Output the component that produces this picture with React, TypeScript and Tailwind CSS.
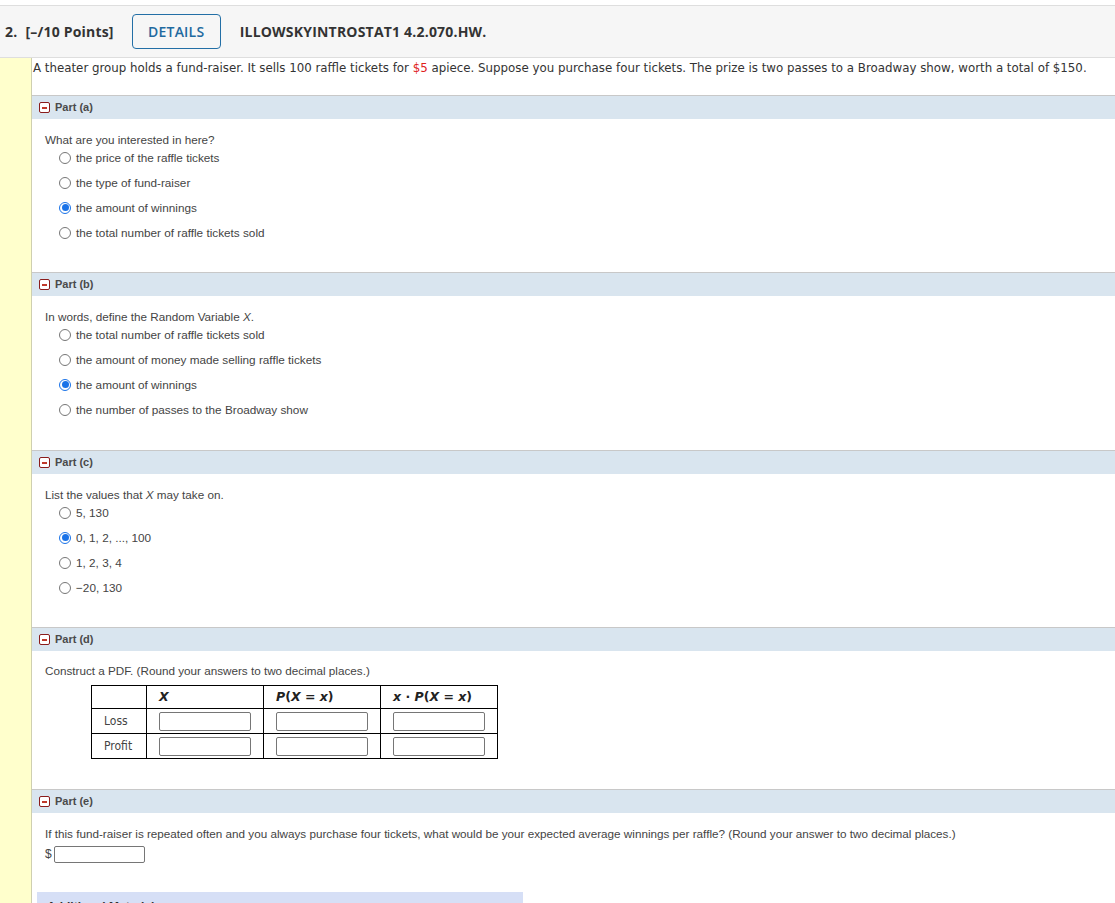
import React from 'react';

const arial = { fontFamily: '"Liberation Sans", Arial, sans-serif' };
const tahoma = { fontFamily: '"DejaVu Sans Condensed", "DejaVu Sans", Tahoma, sans-serif' };

function MinusBox() {
    return (
        <span className="inline-flex h-[11px] w-[11px] items-center justify-center rounded-[2px] border border-[#8a1c1c] bg-white">
            <span className="h-[2px] w-[5px] bg-[#c0392b]" />
        </span>
    );
}

function Radio({ checked }: { checked?: boolean }) {
    if (checked) {
        return (
            <span className="inline-flex h-[12px] w-[12px] items-center justify-center rounded-full border border-[#1a73e8] bg-white">
                <span className="h-[7px] w-[7px] rounded-full bg-[#1a73e8]" />
            </span>
        );
    }
    return <span className="inline-block h-[12px] w-[12px] rounded-full border border-[#767676] bg-white" />;
}

function PartHeader({ label }: { label: string }) {
    return (
        <div className="flex h-[24px] items-center gap-[5px] border-t border-[#c8c8c8] bg-[#d9e5ef] pl-[7px]">
            <MinusBox />
            <span className="text-[11px] font-bold text-[#4a4a4a]" style={arial}>
                {label}
            </span>
        </div>
    );
}

function Options({ items, selected }: { items: string[]; selected: number }) {
    return (
        <div className="mt-[-2px] pl-[14px]">
            {items.map((t, i) => (
                <div key={t} className="flex h-[25px] items-center gap-[5px]">
                    <Radio checked={i === selected} />
                    <span className="text-[11.75px] text-[#444]">{t}</span>
                </div>
            ))}
        </div>
    );
}

function Question({ children }: { children: React.ReactNode }) {
    return <div className="h-[14px] text-[11.7px] leading-[14px] text-[#444]">{children}</div>;
}

function Cell({ children }: { children?: React.ReactNode }) {
    return <td className="h-[25px] border border-black px-[12px]">{children}</td>;
}

function Field({ w = 'w-[92px]', h = 'h-[19px]' }: { w?: string; h?: string }) {
    return <span className={`block ${h} ${w} rounded-[2px] border border-[#767676] bg-white`} />;
}

export default function App() {
    const math = { fontFamily: '"DejaVu Sans", Verdana, sans-serif' };
    return (
        <div className="min-h-[903px] bg-white text-[#333]" style={arial}>
            {/* Question header */}
            <div className="h-[5px]" />
            <div
                className="flex h-[53px] items-center border-y border-[#dedede] bg-[#f6f6f6] pl-[5px] text-[14px] font-bold tracking-[0.2px] text-[#333]"
                style={{ fontFamily: '"Open Sans", sans-serif' }}
            >
                <span>2.</span>
                <span className="ml-[8px]">[–/10 Points]</span>
                <span className="ml-[18px] flex h-[35px] w-[89px] items-center justify-center rounded-[4px] border border-[#236fa6] font-semibold text-[#1f6aa0]">
                    DETAILS
                </span>
                <span className="ml-[19px]">ILLOWSKYINTROSTAT1 4.2.070.HW.</span>
            </div>

            <div className="flex">
                {/* yellow margin */}
                <div className="w-[32px] shrink-0 border-r border-[#cfcfb0] bg-[#ffffcc]" />

                <div className="min-w-0 flex-1">
                    <div className="h-[37px] pt-[1px] pl-[1px] text-[13.15px] leading-[18px] text-[#333]" style={tahoma}>
                        A theater group holds a fund-raiser. It sells 100 raffle tickets for{' '}
                        <span className="text-[#e0211b]">$5</span> apiece. Suppose you purchase four tickets. The prize
                        is two passes to a Broadway show, worth a total of $150.
                    </div>

                    {/* Part (a) */}
                    <PartHeader label="Part (a)" />
                    <div className="pt-[14px] pb-[27px] pl-[13px]">
                        <Question>What are you interested in here?</Question>
                        <Options
                            selected={2}
                            items={[
                                'the price of the raffle tickets',
                                'the type of fund-raiser',
                                'the amount of winnings',
                                'the total number of raffle tickets sold',
                            ]}
                        />
                    </div>

                    {/* Part (b) */}
                    <PartHeader label="Part (b)" />
                    <div className="pt-[14px] pb-[28px] pl-[13px]">
                        <Question>
                            In words, define the Random Variable <i>X</i>.
                        </Question>
                        <Options
                            selected={2}
                            items={[
                                'the total number of raffle tickets sold',
                                'the amount of money made selling raffle tickets',
                                'the amount of winnings',
                                'the number of passes to the Broadway show',
                            ]}
                        />
                    </div>

                    {/* Part (c) */}
                    <PartHeader label="Part (c)" />
                    <div className="pt-[14px] pb-[27px] pl-[13px]">
                        <Question>
                            List the values that <i>X</i> may take on.
                        </Question>
                        <Options selected={1} items={['5, 130', '0, 1, 2, ..., 100', '1, 2, 3, 4', '−20, 130']} />
                    </div>

                    {/* Part (d) */}
                    <PartHeader label="Part (d)" />
                    <div className="pt-[13px] pb-[30px] pl-[13px]">
                        <Question>Construct a PDF. (Round your answers to two decimal places.)</Question>
                        <table className="mt-[7px] ml-[46px] border-collapse text-[12px] text-[#444]">
                            <tbody>
                                <tr style={math} className="text-[12.5px] font-semibold text-[#222]">
                                    <td className="h-[23px] w-[55px] border border-black" />
                                    <td className="h-[23px] w-[117px] border border-black px-[12px]">
                                        <i>X</i>
                                    </td>
                                    <td className="h-[23px] w-[117px] border border-black px-[12px]">
                                        <i>P</i>(<i>X</i> = <i>x</i>)
                                    </td>
                                    <td className="h-[23px] w-[116px] border border-black px-[12px]">
                                        <i>x</i> · <i>P</i>(<i>X</i> = <i>x</i>)
                                    </td>
                                </tr>
                                {['Loss', 'Profit'].map((r) => (
                                    <tr key={r}>
                                        <td className="h-[25px] border border-black px-[12px]" style={tahoma}>
                                            {r}
                                        </td>
                                        <Cell>
                                            <Field />
                                        </Cell>
                                        <Cell>
                                            <Field />
                                        </Cell>
                                        <Cell>
                                            <Field />
                                        </Cell>
                                    </tr>
                                ))}
                            </tbody>
                        </table>
                    </div>

                    {/* Part (e) */}
                    <PartHeader label="Part (e)" />
                    <div className="pt-[14px] pl-[13px]">
                        <div className="h-[14px] text-[11.7px] leading-[14px] text-[#444]">
                            If this fund-raiser is repeated often and you always purchase four tickets, what would be
                            your expected average winnings per raffle? (Round your answer to two decimal places.)
                        </div>
                        <div className="mt-[4px] flex items-center gap-[2px] text-[12px] text-[#444]">
                            <span>$</span>
                            <Field w="w-[91px]" h="h-[17px]" />
                        </div>
                    </div>

                    <div className="mt-[29px] ml-[5px] h-[40px] w-[486px] bg-[#d6dff6] pt-[6px] pl-[10px] text-[12px] font-bold text-[#333]">
                        Additional Materials
                    </div>
                </div>
            </div>
        </div>
    );
}
